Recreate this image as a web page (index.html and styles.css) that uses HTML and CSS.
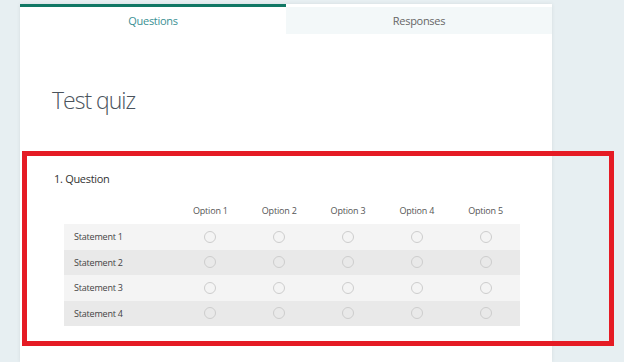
FILE: index.html
```html
<!DOCTYPE html>
<html lang="en">
<head>
  <meta charset="UTF-8">
  <title>Test quiz</title>
  <link rel="stylesheet" href="styles.css">
</head>
<body>
  <div class="page">
    <div class="card">
      <div class="tabs">
        <div class="tab active">Questions</div>
        <div class="tab">Responses</div>
      </div>
      <h1 class="title">Test quiz</h1>

      <div class="question">
        <div class="q-label">1. Question</div>
        <div class="matrix">
          <div class="head"></div>
          <div class="head">Option 1</div>
          <div class="head">Option 2</div>
          <div class="head">Option 3</div>
          <div class="head">Option 4</div>
          <div class="head">Option 5</div>
        </div>
        <div class="rows">
          <div class="row">
            <div class="stmt">Statement 1</div>
            <div class="cell"><span class="radio"></span></div>
            <div class="cell"><span class="radio"></span></div>
            <div class="cell"><span class="radio"></span></div>
            <div class="cell"><span class="radio"></span></div>
            <div class="cell"><span class="radio"></span></div>
          </div>
          <div class="row">
            <div class="stmt">Statement 2</div>
            <div class="cell"><span class="radio"></span></div>
            <div class="cell"><span class="radio"></span></div>
            <div class="cell"><span class="radio"></span></div>
            <div class="cell"><span class="radio"></span></div>
            <div class="cell"><span class="radio"></span></div>
          </div>
          <div class="row">
            <div class="stmt">Statement 3</div>
            <div class="cell"><span class="radio"></span></div>
            <div class="cell"><span class="radio"></span></div>
            <div class="cell"><span class="radio"></span></div>
            <div class="cell"><span class="radio"></span></div>
            <div class="cell"><span class="radio"></span></div>
          </div>
          <div class="row">
            <div class="stmt">Statement 4</div>
            <div class="cell"><span class="radio"></span></div>
            <div class="cell"><span class="radio"></span></div>
            <div class="cell"><span class="radio"></span></div>
            <div class="cell"><span class="radio"></span></div>
            <div class="cell"><span class="radio"></span></div>
          </div>
        </div>
      </div>
    </div>
  </div>
  <!-- highlight frame drawn over the question -->
  <div class="highlight"></div>
</body>
</html>
```

FILE: styles.css
```css
body {
  margin: 0;
  background: #e7eff2;
  font-family: "Open Sans", "Noto Sans", sans-serif;
  color: #333;
  overflow: hidden;
}
.page { padding: 4px 0 0 20px; height: 358px; }
.card {
  width: 532px; height: 358px;
  background: #fff;
  box-shadow: 0 0 4px rgba(0,0,0,0.08);
}

.tabs { display: grid; grid-template-columns: 266px 266px; }
.tab {
  margin-top: 3px; height: 27px;
  background: #f3f8f9; color: #666;
  font-size: 11px; letter-spacing: -0.3px; line-height: 27px; text-align: center;
}
.tab.active {
  margin-top: 0;
  border-top: 3px solid #117865;
  background: #fff; color: #3a9093;
}

.title {
  margin: 50px 0 0 32px;
  font-size: 23px; font-weight: 300; letter-spacing: -1px; line-height: 32px;
  color: #4a535c;
}

.question { padding: 55px 0 0 34px; }
.q-label { font-size: 11px; letter-spacing: -0.3px; line-height: 16px; color: #333; }

.matrix, .rows { margin-left: 10px; width: 456px; }
.matrix, .row {
  display: grid;
  grid-template-columns: 112px repeat(5, 68.8px);
}
.matrix { margin-top: 13px; }
.head {
  height: 24px; padding-top: 4px; box-sizing: border-box;
  font-size: 9px; letter-spacing: -0.2px; line-height: 14px; text-align: center; color: #555;
}
.row { height: 25.5px; background: #f4f4f4; }
.row:nth-child(even) { background: #e9e9e9; }
.stmt { padding-left: 10px; font-size: 9px; letter-spacing: -0.2px; line-height: 25.5px; color: #444; }
.cell { display: flex; align-items: center; justify-content: center; }
.radio {
  width: 12px; height: 12px; box-sizing: border-box;
  border: 1px solid #cdcdcd; border-radius: 50%;
}

.highlight {
  position: absolute; left: 22px; top: 151px;
  width: 592px; height: 195px; box-sizing: border-box;
  border: 5px solid #e51b24;
}
```
